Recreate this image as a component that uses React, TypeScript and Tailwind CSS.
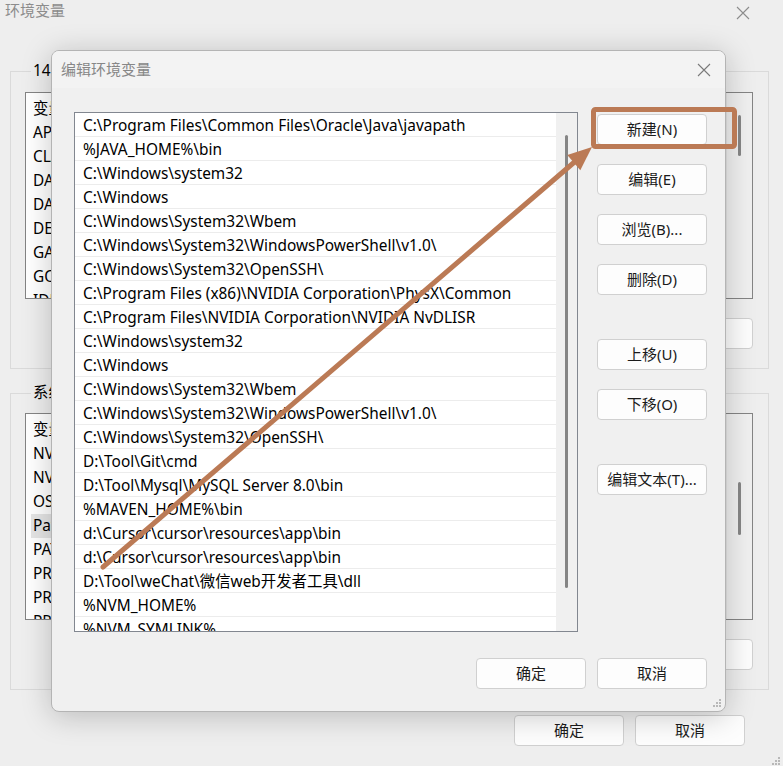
import React from 'react';

const font = "font-['Noto_Sans','Noto_Sans_CJK_SC',sans-serif]";

const paths = [
  'C:\\Program Files\\Common Files\\Oracle\\Java\\javapath',
  '%JAVA_HOME%\\bin',
  'C:\\Windows\\system32',
  'C:\\Windows',
  'C:\\Windows\\System32\\Wbem',
  'C:\\Windows\\System32\\WindowsPowerShell\\v1.0\\',
  'C:\\Windows\\System32\\OpenSSH\\',
  'C:\\Program Files (x86)\\NVIDIA Corporation\\PhysX\\Common',
  'C:\\Program Files\\NVIDIA Corporation\\NVIDIA NvDLISR',
  'C:\\Windows\\system32',
  'C:\\Windows',
  'C:\\Windows\\System32\\Wbem',
  'C:\\Windows\\System32\\WindowsPowerShell\\v1.0\\',
  'C:\\Windows\\System32\\OpenSSH\\',
  'D:\\Tool\\Git\\cmd',
  'D:\\Tool\\Mysql\\MySQL Server 8.0\\bin',
  '%MAVEN_HOME%\\bin',
  'd:\\Cursor\\cursor\\resources\\app\\bin',
  'd:\\Cursor\\cursor\\resources\\app\\bin',
  'D:\\Tool\\weChat\\微信web开发者工具\\dll',
  '%NVM_HOME%',
  '%NVM_SYMLINK%',
];

const userVars = ['变量', 'APPDATA', 'CLASSPATH', 'DATA', 'DAEMON', 'DEV', 'GATE', 'GOPATH', 'IDEA'];
const sysVars = ['变量', 'NVM_HOME', 'NVM_SYMLINK', 'OS', 'Path', 'PATHEXT', 'PROCESSOR', 'PROCESSOR_ID', 'PROCESSOR_LEVEL'];

const CloseIcon = ({ color }: { color: string }) => (
  <svg width="14" height="14" viewBox="0 0 14 14">
    <path d="M1 1 L13 13 M13 1 L1 13" stroke={color} strokeWidth="1.1" fill="none" />
  </svg>
);

const Grip = () => (
  <svg width="10" height="10" viewBox="0 0 10 10">
    <rect x="7" y="1" width="2" height="2" fill="#b8b8b8" />
    <rect x="4" y="4" width="2" height="2" fill="#b8b8b8" />
    <rect x="7" y="4" width="2" height="2" fill="#b8b8b8" />
    <rect x="1" y="7" width="2" height="2" fill="#b8b8b8" />
    <rect x="4" y="7" width="2" height="2" fill="#b8b8b8" />
    <rect x="7" y="7" width="2" height="2" fill="#b8b8b8" />
  </svg>
);

const Btn = ({ label, className = '' }: { label: string; className?: string }) => (
  <div
    className={`w-[110px] h-[31px] flex items-center justify-center rounded-[4px] border border-[#d0d0d0] bg-[#fdfdfd] text-[15px] text-[#1b1b1b] ${className}`}
  >
    {label}
  </div>
);

const BgList = ({ items, highlight, thumb }: { items: string[]; highlight?: number; thumb: string }) => (
  <div className="h-[207px] border border-[#848484] bg-white flex overflow-hidden">
    <div className="flex-1 pt-[4px] pl-[5px]">
      {items.map((v, i) => (
        <div
          key={i}
          className={`h-[24px] leading-[24px] pl-[2px] text-[15.4px] text-black ${highlight === i ? 'bg-[#e5e5e5]' : ''}`}
        >
          {v}
        </div>
      ))}
    </div>
    <div className="w-[26px] bg-[#f0f0f0] border-l border-[#e4e4e4] flex justify-center">
      <div className={`w-[3px] bg-[#868686] rounded-full ${thumb}`} />
    </div>
  </div>
);

export default function App() {
  return (
    <div className={`relative w-[783px] h-[766px] bg-[#eeeeee] overflow-hidden ${font}`}>
      {/* background window */}
      <div className="h-[30px] flex items-start justify-between pl-[5px] pr-[33px]">
        <span className="text-[15px] leading-[20px] text-[#8c8c8c]">环境变量</span>
        <div className="mt-[6px]">
          <CloseIcon color="#8c8c8c" />
        </div>
      </div>

      <div className="pl-[10px] pr-[14px]">
        <fieldset className="mt-[31px] border border-[#dadada] pl-[14px] pr-[15px] pb-[19px]">
          <legend className="ml-[6px] px-[2px] text-[15.4px] leading-[20px] text-black">1411的用户变量</legend>
          <div className="mt-[11px]">
            <BgList items={userVars} thumb="mt-[22px] h-[41px]" />
          </div>
          <div className="mt-[19px] flex justify-end gap-[11px]">
            <Btn label="新建(N)..." />
            <Btn label="编辑(E)..." />
            <Btn label="删除(D)" />
          </div>
        </fieldset>

        <fieldset className="mt-[14px] border border-[#dadada] pl-[14px] pr-[15px] pb-[19px]">
          <legend className="ml-[6px] px-[2px] text-[15.4px] leading-[20px] text-black">系统变量(S)</legend>
          <div className="mt-[10px]">
            <BgList items={sysVars} highlight={4} thumb="mt-[68px] h-[53px]" />
          </div>
          <div className="mt-[19px] flex justify-end gap-[11px]">
            <Btn label="新建(W)..." />
            <Btn label="编辑(I)..." />
            <Btn label="删除(L)" />
          </div>
        </fieldset>

        <div className="mt-[25px] flex justify-end gap-[11px] pr-[24px]">
          <Btn label="确定" />
          <Btn label="取消" />
        </div>
      </div>
      <div className="absolute right-[2px] bottom-[0px]">
        <Grip />
      </div>

      {/* edit dialog */}
      <div className="absolute left-[51px] top-[50px] w-[675px] h-[662px] rounded-[8px] border border-[#b4b4b4] bg-[#f0f0f0] shadow-[0_4px_30px_rgba(0,0,0,0.22)] flex flex-col overflow-hidden">
        <div className="h-[37px] bg-[#f3f3f3] flex items-center justify-between pl-[9px] pr-[14px]">
          <span className="text-[15px] text-[#878787]">编辑环境变量</span>
          <CloseIcon color="#7a7a7a" />
        </div>
        <div className="flex pl-[22px] pt-[24px]">
          <div className="w-[504px] h-[520px] border border-[#828790] bg-white flex overflow-hidden">
            <div className="flex-1">
              {paths.map((p, i) => (
                <div
                  key={i}
                  className="h-[24px] leading-[26px] border-b border-[#ececec] pl-[8px] text-[15.4px] text-black whitespace-nowrap"
                >
                  {p}
                </div>
              ))}
            </div>
            <div className="w-[21px] bg-[#f0f0f0] flex justify-center">
              <div className="w-[3px] h-[453px] mt-[22px] bg-[#858585] rounded-full" />
            </div>
          </div>
          <div className="ml-[19px] pt-[2px] flex flex-col">
            <Btn label="新建(N)" />
            <Btn label="编辑(E)" className="mt-[19px]" />
            <Btn label="浏览(B)..." className="mt-[19px]" />
            <Btn label="删除(D)" className="mt-[19px]" />
            <Btn label="上移(U)" className="mt-[44px]" />
            <Btn label="下移(O)" className="mt-[19px]" />
            <Btn label="编辑文本(T)..." className="mt-[44px]" />
          </div>
        </div>
        <div className="mt-[26px] flex justify-end gap-[11px] pr-[18px]">
          <Btn label="确定" />
          <Btn label="取消" />
        </div>
        <div className="absolute right-[3px] bottom-[3px]">
          <Grip />
        </div>
      </div>

      {/* annotation */}
      <svg className="absolute inset-0 pointer-events-none" width="783" height="766" viewBox="0 0 783 766">
        <rect x="593.5" y="109.5" width="141" height="37" rx="2" fill="none" stroke="#bb7a55" strokeWidth="5" />
        <line x1="103" y1="567" x2="578" y2="159" stroke="#bb7a55" strokeWidth="5" strokeLinecap="round" />
        <polygon points="592,147 580.3,170.2 567.3,155" fill="#bb7a55" />
      </svg>
    </div>
  );
}
